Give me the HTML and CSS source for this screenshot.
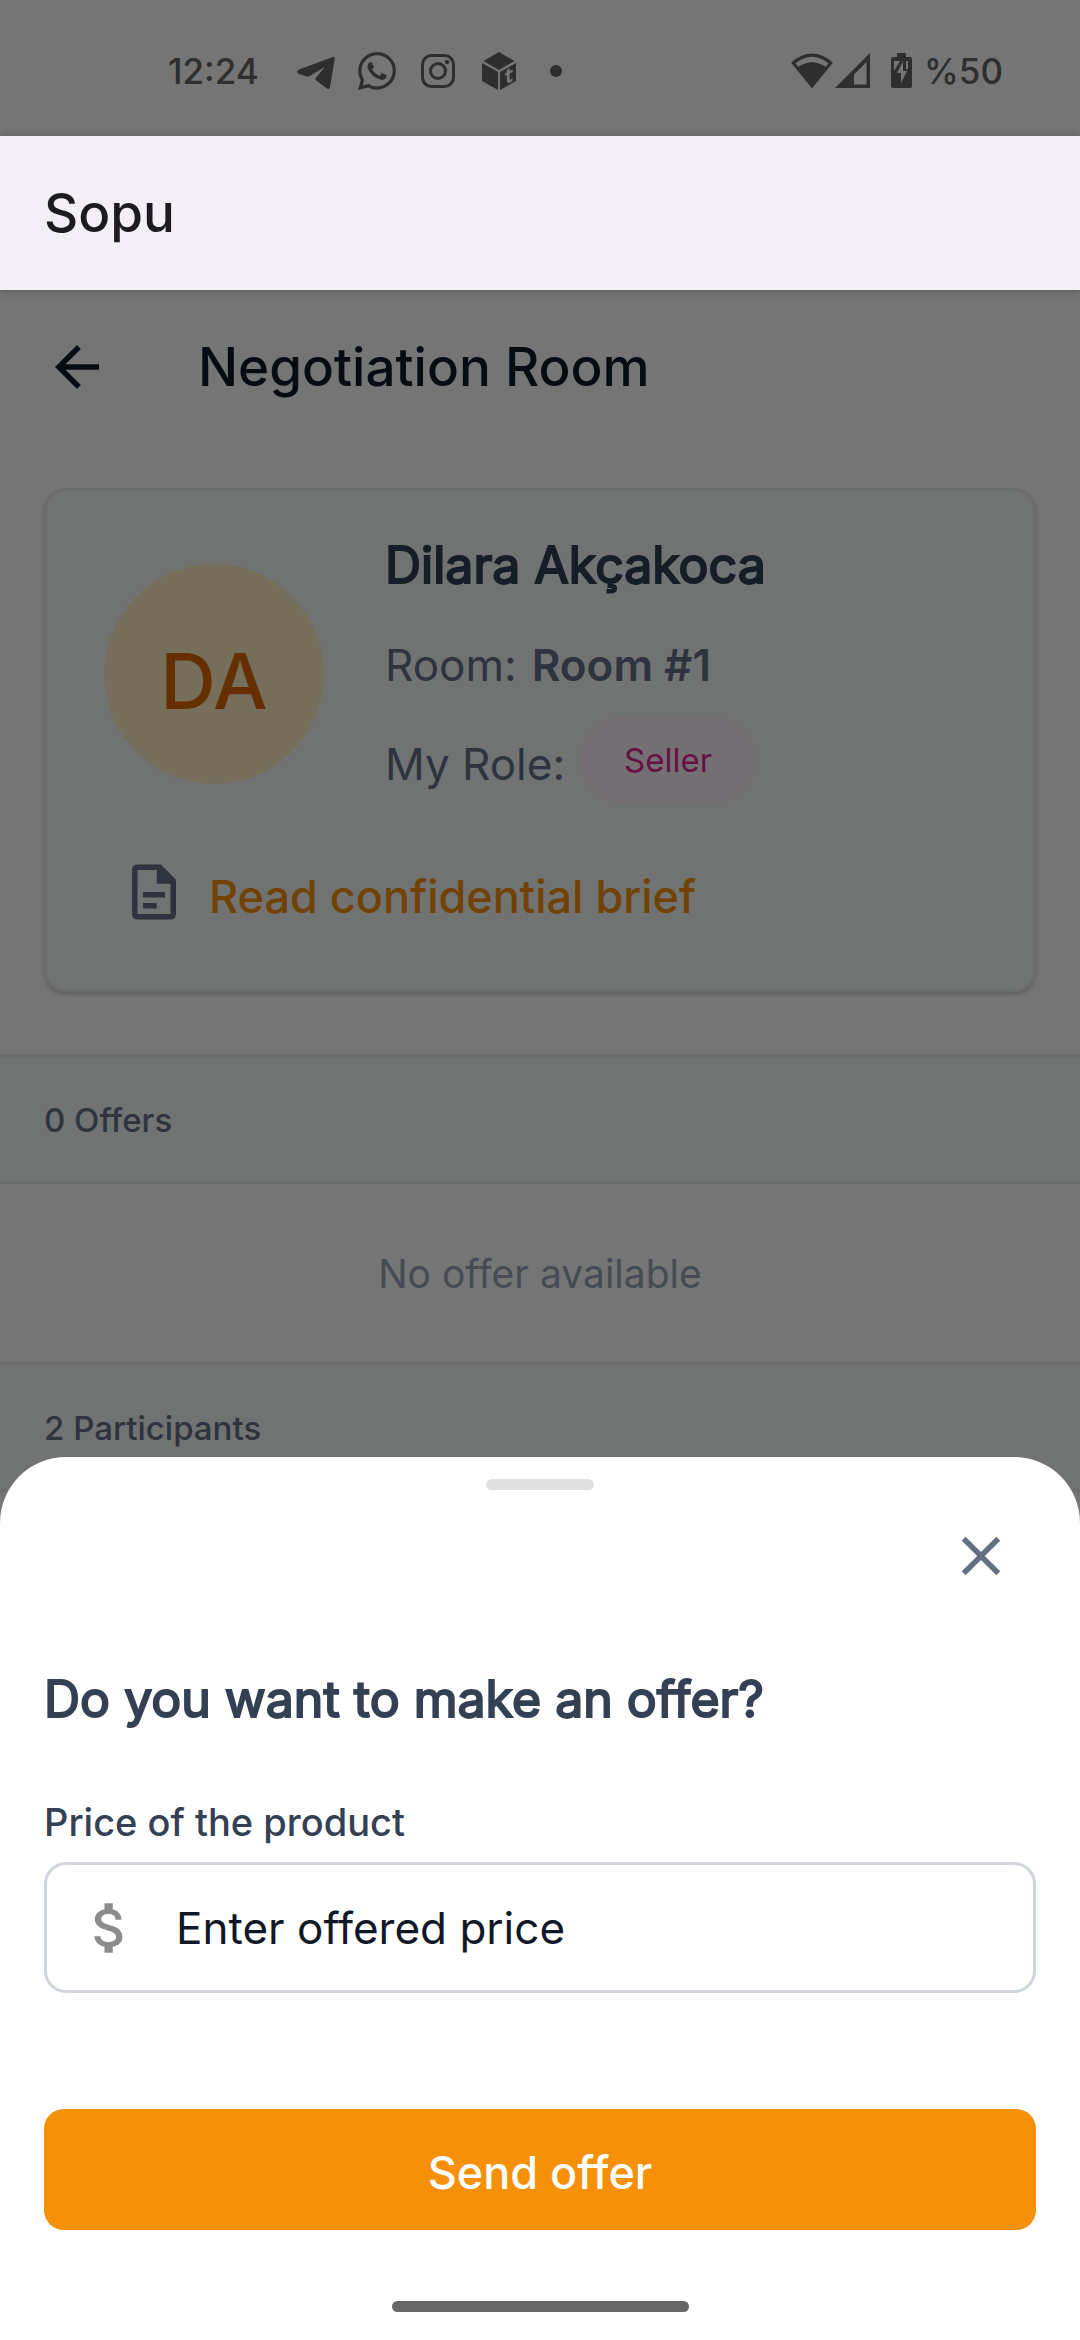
FILE: index.html
```html
<!DOCTYPE html>
<html lang="en">
<head>
<meta charset="utf-8">
<meta name="viewport" content="width=device-width, initial-scale=1">
<title>Sopu</title>
<link rel="stylesheet" href="styles.css">
</head>
<body>
<div class="screen">
  <div class="status-bar">
    <div class="status-group status-left">
      <span class="clock">12:24</span>
      <svg class="status-icon" viewBox="0 0 38 38" aria-hidden="true"><path d="M2 17.500 36 5Q38 4.500 37.700 7L33 35Q32.500 38 30 36.500L19.500 28.800Q17.500 27 19 25.500L28 15 12.500 24Q10.500 25 8 24L2 22Q-2 20 2 17.500z"/></svg>
      <svg class="status-icon" viewBox="0 0 24 24" aria-hidden="true"><path d="M17.472 14.382c-.297-.149-1.758-.867-2.030-.967-.273-.099-.471-.148-.670.150-.197.297-.767.966-.940 1.164-.173.199-.347.223-.644.075-.297-.150-1.255-.463-2.390-1.475-.883-.788-1.480-1.761-1.653-2.059-.173-.297-.018-.458.130-.606.134-.133.298-.347.446-.520.149-.174.198-.298.298-.497.099-.198.050-.371-.025-.520-.075-.149-.669-1.612-.916-2.207-.242-.579-.487-.500-.669-.510-.173-.008-.371-.010-.570-.010-.198 0-.520.074-.792.372-.272.297-1.040 1.016-1.040 2.479 0 1.462 1.065 2.875 1.213 3.074.149.198 2.096 3.200 5.077 4.487.709.306 1.262.489 1.694.625.712.227 1.360.195 1.871.118.571-.085 1.758-.719 2.006-1.413.248-.694.248-1.289.173-1.413-.074-.124-.272-.198-.570-.347m-5.421 7.403h-.004a9.870 9.870 0 0 1-5.031-1.378l-.361-.214-3.741.982.998-3.648-.235-.374a9.860 9.860 0 0 1-1.510-5.260c.001-5.450 4.436-9.884 9.888-9.884 2.640 0 5.122 1.030 6.988 2.898a9.825 9.825 0 0 1 2.893 6.994c-.003 5.450-4.437 9.884-9.885 9.884m8.413-18.297A11.815 11.815 0 0 0 12.050 0C5.495 0 .160 5.335.157 11.892c0 2.096.547 4.142 1.588 5.945L.057 24l6.305-1.654a11.882 11.882 0 0 0 5.683 1.448h.005c6.554 0 11.890-5.335 11.893-11.893a11.821 11.821 0 0 0-3.480-8.413z"/></svg>
      <svg class="status-icon" viewBox="0 0 38 38" aria-hidden="true"><g fill="none" stroke="currentColor" stroke-width="3"><rect x="3.500" y="3.500" width="31" height="31" rx="9"/><circle cx="19" cy="19" r="7.500"/></g><circle cx="28" cy="10" r="2.200"/></svg>
      <svg class="status-icon" viewBox="0 0 38 38" aria-hidden="true"><path d="M19 0 34.500 9 19 18 3.500 9z"/><path d="M2 11 18 20v18L2 29z"/><path fill-rule="evenodd" d="M36 11 20 20v18l16-9zM27 17.500l2.600-1.400v3l3-1.600v2.500l-3 1.600v5.400q0 1 1 .5l2-1v2.500l-2.600 1.400q-3 1.500-3-1.500v-5.900l-2 1v-2.500l2-1z"/></svg>
      <svg class="status-icon" viewBox="0 0 38 38" aria-hidden="true"><circle cx="15" cy="19" r="6"/></svg>
    </div>
    <div class="status-group status-right">
      <svg class="wifi-icon" viewBox="0 0 42 36" aria-hidden="true"><path fill-rule="evenodd" d="M0 9.500Q21-8.500 42 9.500L21 35.500zM4.500 10.500 7.500 13.800Q21 4.500 34.500 13.800L37.500 10.500Q21-3 4.500 10.500z"/></svg>
      <svg class="signal-icon" viewBox="0 0 36 36" aria-hidden="true"><path fill-rule="evenodd" d="M35 0v35H0zM31.500 9 19 21.500V31.500H31.500z"/></svg>
      <svg class="battery-icon" viewBox="0 0 21 36" aria-hidden="true"><path fill-rule="evenodd" d="M6 0h9v4h4q2 0 2 2v27q0 2-2 2H2q-2 0-2-2V6q0-2 2-2h4zM3 8v10L9 8zM12 8 6 20h4v10l6-12h-4zM15 8v8h2V8z"/></svg>
      <span class="battery-level">%50</span>
    </div>
  </div>

  <div class="app-bar">Sopu</div>

  <main class="page">
    <header class="page-header">
      <button class="icon-button" type="button" aria-label="Back"><svg class="icon" viewBox="0 0 24 24" aria-hidden="true"><path d="M20 11H7.830l5.590-5.590L12 4l-8 8 8 8 1.410-1.410L7.830 13H20v-2z"/></svg></button>
      <h1 class="page-title">Negotiation Room</h1>
    </header>

    <section class="room-card">
      <div class="profile">
        <div class="avatar">DA</div>
        <div class="profile-info">
          <h2 class="profile-name">Dilara Akçakoca</h2>
          <p class="profile-row">Room: <strong>Room #1</strong></p>
          <p class="profile-row">My Role: <span class="role-pill">Seller</span></p>
        </div>
      </div>
      <a class="brief-link" href="#brief">
        <svg class="icon brief-icon" viewBox="0 0 24 24" aria-hidden="true"><path fill-rule="evenodd" d="M6 2h8.500L20 7.500V20q0 2-2 2H6q-2 0-2-2V4q0-2 2-2zm0 2v16h12V9h-5V4zm2 8h8v2H8zm0 4h5v2H8z"/></svg>
        <span class="brief-text">Read confidential brief</span>
      </a>
    </section>

    <h2 class="band">0 Offers</h2>
    <p class="empty">No offer available</p>
    <h2 class="band">2 Participants</h2>
  </main>
</div>

<div class="scrim"></div>

<form class="sheet" role="dialog" aria-labelledby="sheet-title">
  <span class="handle"></span>
  <button class="icon-button close-button" type="button" aria-label="Close"><svg class="icon" viewBox="0 0 24 24" aria-hidden="true"><path d="M19 6.410 17.590 5 12 10.590 6.410 5 5 6.410 10.590 12 5 17.590 6.410 19 12 13.410 17.590 19 19 17.590 13.410 12z"/></svg></button>
  <h2 class="sheet-title" id="sheet-title">Do you want to make an offer?</h2>
  <label class="field-label" for="price">Price of the product</label>
  <div class="field">
    <svg class="icon field-icon" viewBox="0 0 24 24" aria-hidden="true"><path d="M11.800 10.900c-2.270-.590-3-1.200-3-2.150 0-1.090 1.010-1.850 2.700-1.850 1.780 0 2.440.850 2.500 2.100h2.210c-.070-1.720-1.120-3.300-3.210-3.810V3h-3v2.160c-1.940.420-3.500 1.680-3.500 3.610 0 2.310 1.910 3.460 4.700 4.130 2.500.600 3 1.480 3 2.410 0 .690-.490 1.790-2.700 1.790-2.060 0-2.870-.920-2.980-2.100h-2.200c.120 2.190 1.760 3.420 3.680 3.830V21h3v-2.150c1.950-.370 3.500-1.500 3.500-3.550 0-2.840-2.430-3.810-4.700-4.400z"/></svg>
    <input class="field-input" id="price" type="text" inputmode="decimal" placeholder="Enter offered price">
  </div>
  <button class="send-button" type="submit">Send offer</button>
  <span class="nav-handle"></span>
</form>
</body>
</html>
```

FILE: styles.css
```css
* {
  box-sizing: border-box;
}

body {
  margin: 0;
  min-height: 100vh;
  background: #fff;
  color: #344054;
  font-family: Inter, "Liberation Sans", sans-serif;
}

h1,
h2,
p {
  margin: 0;
}

button,
input {
  font: inherit;
}

svg {
  display: block;
  flex: none;
  fill: currentColor;
}

.icon {
  width: 66px;
  height: 66px;
}

.icon-button {
  padding: 0;
  border: 0;
  background: none;
  color: inherit;
}

/* Status bar */
.status-bar {
  display: flex;
  justify-content: space-between;
  height: 136px;
  padding: 6px 77px 0 168px;
  color: #646464;
  font-size: 35px;
  font-weight: 500;
}

.status-group {
  display: flex;
  align-items: center;
}

.status-left {
  gap: 23px;
}

.clock {
  margin-right: 15px;
}

.status-icon {
  width: 38px;
  height: 38px;
}

.wifi-icon {
  width: 42px;
  height: 36px;
}

.signal-icon {
  width: 36px;
  height: 36px;
  margin-left: 2px;
}

.battery-icon {
  width: 21px;
  height: 36px;
  margin: 0 12px 0 20px;
}

/* App bar stays above the scrim */
.app-bar {
  position: relative;
  z-index: 2;
  display: flex;
  align-items: center;
  height: 154px;
  padding: 0 44px;
  background: #f2f0f6;
  color: #1d1b20;
  font-size: 53px;
  font-weight: 500;
  box-shadow: 0 1px 8px rgba(0, 0, 0, 0.25);
}

/* Page */
.page-header {
  display: flex;
  align-items: center;
  gap: 88px;
  height: 154px;
  padding: 0 44px;
  color: #101828;
}

.page-title {
  font-size: 53px;
  font-weight: 500;
}

.room-card {
  margin: 44px 44px 62px;
  padding: 38px 57px 64px;
  border: 3px solid #e9efec;
  border-radius: 22px;
  background: #f5fbf8;
  box-shadow: 0 3px 4px rgba(16, 24, 40, 0.2);
}

.profile {
  display: flex;
  align-items: center;
  gap: 61px;
}

.avatar {
  display: flex;
  flex: none;
  align-items: center;
  justify-content: center;
  width: 220px;
  height: 220px;
  padding-top: 14px;
  border-radius: 50%;
  background: #fef0c7;
  color: #dc6803;
  font-size: 77px;
  font-weight: 500;
}

.profile-name,
.sheet-title {
  font-size: 50px;
  font-weight: 400;
  -webkit-text-stroke: 2px currentColor;
}

.profile-name {
  margin-bottom: 20px;
  line-height: 72px;
}

.profile-row {
  display: flex;
  align-items: center;
  gap: 15px;
  margin-bottom: 7px;
  color: #667085;
  font-size: 44px;
  line-height: 88px;
}

.profile-row strong {
  font-weight: 600;
}

.role-pill {
  margin-bottom: 8px;
  padding: 0 44px;
  border-radius: 44px;
  background: #fdf2fa;
  color: #dd2590;
  font-size: 33px;
}

.brief-link {
  display: flex;
  align-items: center;
  gap: 22px;
  margin: 40px 16px 0 17px;
  color: #f79009;
  font-size: 45px;
  font-weight: 500;
  text-decoration: none;
}

.brief-text {
  padding-top: 8px;
}

.brief-icon {
  color: #667085;
}

.band {
  padding: 41px 44px 39px;
  border: solid #e9efec;
  border-width: 3px 0;
  background: #f5fbf8;
  color: #667085;
  font-size: 33px;
  font-weight: 500;
  line-height: 44px;
}

.empty {
  padding: 67px 44px 65px;
  color: #98a2b3;
  font-size: 39px;
  line-height: 46px;
  text-align: center;
}

.scrim {
  position: fixed;
  inset: 0;
  z-index: 1;
  background: rgba(0, 0, 0, 0.54);
}

/* Bottom sheet */
.sheet {
  position: fixed;
  right: 0;
  bottom: 0;
  left: 0;
  z-index: 3;
  display: flex;
  flex-direction: column;
  padding: 22px 44px 28px;
  border-radius: 66px 66px 0 0;
  background: #fff;
}

.handle {
  align-self: center;
  width: 108px;
  height: 11px;
  border-radius: 6px;
  background: #e0e0e0;
}

.close-button {
  align-self: flex-end;
  margin: 33px 22px 77px 0;
  color: #667085;
}

.sheet-title {
  margin-bottom: 67px;
  line-height: 66px;
}

.field-label {
  margin-bottom: 17px;
  font-size: 38px;
  font-weight: 500;
  line-height: 46px;
}

.field {
  display: flex;
  align-items: center;
  gap: 33px;
  height: 131px;
  padding: 0 30px;
  border: 3px solid #d0d5dd;
  border-radius: 22px;
}

.field-icon {
  color: #8c8c8c;
}

.field-input {
  flex: 1;
  min-width: 0;
  padding: 0;
  border: 0;
  outline: 0;
  background: none;
  color: #101828;
  font-size: 44px;
}

.field-input::placeholder {
  color: #101828;
  opacity: 1;
}

.send-button {
  height: 121px;
  margin: 116px 0 71px;
  padding: 6px 0 0;
  border: 0;
  border-radius: 20px;
  background: #f79009;
  color: #fff;
  font-size: 45px;
  font-weight: 500;
}

.nav-handle {
  align-self: center;
  width: 297px;
  height: 11px;
  border-radius: 6px;
  background: #666;
}
```
